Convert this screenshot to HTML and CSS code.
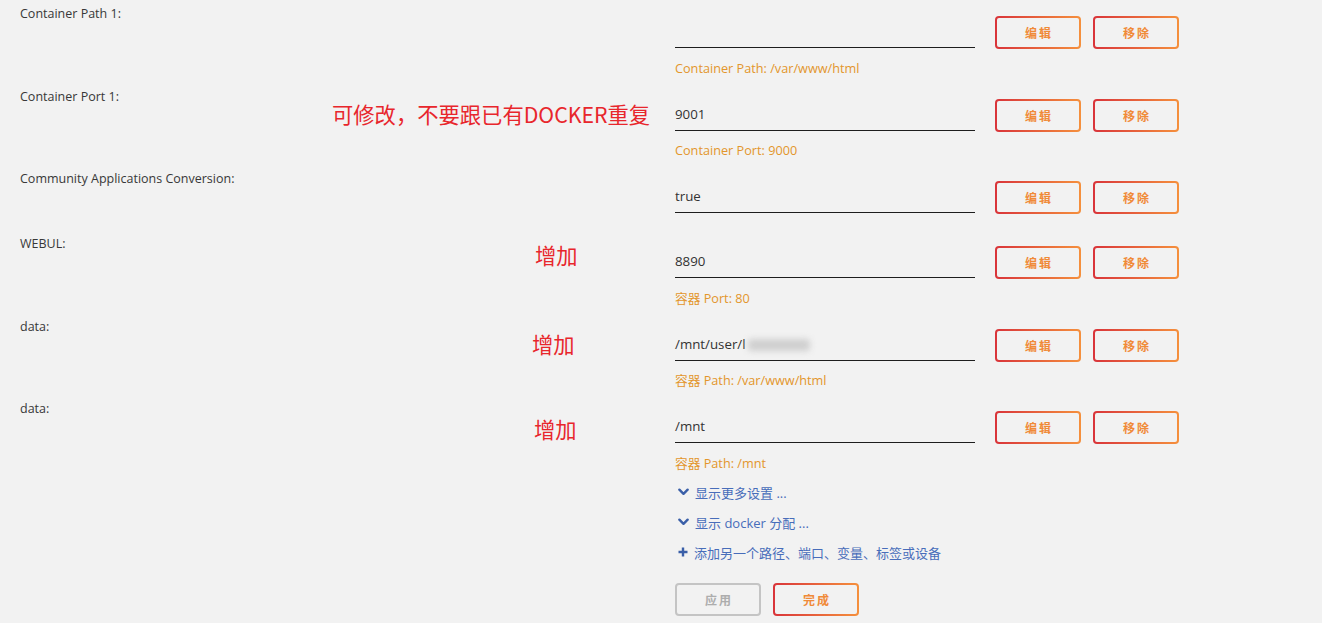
FILE: index.html
```html
<!DOCTYPE html>
<html lang="zh">
<head>
<meta charset="utf-8">
<title>Docker template</title>
<link rel="stylesheet" href="styles.css">
</head>
<body>
<div class="form">
  <div class="row">
    <div class="label">Container Path 1:</div>
    <div class="field">
      <div class="input"></div>
      <div class="desc">Container Path: /var/www/html</div>
    </div>
    <div class="actions"><button class="btn">编辑</button><button class="btn">移除</button></div>
  </div>

  <div class="row">
    <div class="label">Container Port 1:</div>
    <div class="note note-modify">可修改，不要跟已有DOCKER重复</div>
    <div class="field">
      <div class="input">9001</div>
      <div class="desc">Container Port: 9000</div>
    </div>
    <div class="actions"><button class="btn">编辑</button><button class="btn">移除</button></div>
  </div>

  <div class="row">
    <div class="label">Community Applications Conversion:</div>
    <div class="field">
      <div class="input">true</div>
    </div>
    <div class="actions"><button class="btn">编辑</button><button class="btn">移除</button></div>
  </div>

  <div class="row">
    <div class="label">WEBUL:</div>
    <div class="note note-a">增加</div>
    <div class="field">
      <div class="input">8890</div>
      <div class="desc">容器 Port: 80</div>
    </div>
    <div class="actions"><button class="btn">编辑</button><button class="btn">移除</button></div>
  </div>

  <div class="row">
    <div class="label">data:</div>
    <div class="note note-b">增加</div>
    <div class="field">
      <div class="input">/mnt/user/l<span class="blur"></span></div>
      <div class="desc">容器 Path: /var/www/html</div>
    </div>
    <div class="actions"><button class="btn">编辑</button><button class="btn">移除</button></div>
  </div>

  <div class="row">
    <div class="label">data:</div>
    <div class="note note-c">增加</div>
    <div class="field">
      <div class="input">/mnt</div>
      <div class="desc">容器 Path: /mnt</div>
    </div>
    <div class="actions"><button class="btn">编辑</button><button class="btn">移除</button></div>
  </div>

  <div class="more">
    <div class="link"><svg class="ico" viewBox="0 0 12 8" width="11" height="8"><polyline points="1.5,1.5 6,6 10.5,1.5" fill="none" stroke="#3a5fa8" stroke-width="2.6" stroke-linecap="round" stroke-linejoin="round"/></svg><span>显示更多设置 ...</span></div>
    <div class="link"><svg class="ico" viewBox="0 0 12 8" width="11" height="8"><polyline points="1.5,1.5 6,6 10.5,1.5" fill="none" stroke="#3a5fa8" stroke-width="2.6" stroke-linecap="round" stroke-linejoin="round"/></svg><span>显示 docker 分配 ...</span></div>
    <div class="link"><svg class="ico" viewBox="0 0 10 10" width="10" height="10"><path d="M5 0.5V9.5M0.5 5H9.5" stroke="#3a5fa8" stroke-width="2.4"/></svg><span>添加另一个路径、端口、变量、标签或设备</span></div>
    <div class="submit"><button class="btn disabled">应用</button><button class="btn">完成</button></div>
  </div>
</div>
</body>
</html>
```

FILE: styles.css
```css
html, body {
  margin: 0;
  padding: 0;
  background: #f2f2f2;
}
body {
  font-family: "Open Sans", "Noto Sans", "Noto Sans CJK SC", sans-serif;
  color: #333;
  font-size: 12px;
}
.form {
  padding: 6px 0 0 20px;
}
.row {
  position: relative;
  display: flex;
  align-items: flex-start;
  padding-bottom: 13px;
}
.label {
  width: 655px;
  flex: none;
  line-height: 16px;
  font-size: 12.5px;
  color: #383838;
  font-family: "Open Sans", "Noto Sans CJK SC", sans-serif;
}
.field {
  width: 300px;
  flex: none;
  margin-top: 10px;
}
.input {
  height: 32px;
  box-sizing: border-box;
  border-bottom: 1px solid #1e1e1e;
  line-height: 31px;
  font-size: 13.3px;
  color: #333;
  margin-bottom: 10px;
  white-space: nowrap;
}
.blur {
  display: inline-block;
  vertical-align: middle;
  width: 62px;
  height: 12px;
  margin-left: 2px;
  background: #cfcfcf;
  filter: blur(3px);
  border-radius: 4px;
}
.desc {
  padding-top: 1.5px;
  line-height: 16px;
  color: #e3962c;
  font-size: 12.7px;
  font-family: "Open Sans", "Noto Sans CJK SC", sans-serif;
}
.actions, .submit {
  display: flex;
  gap: 12px;
  margin-top: 10px;
  margin-left: 20px;
}
.btn {
  width: 86px;
  height: 33px;
  box-sizing: border-box;
  border: 2px solid transparent;
  border-radius: 4px;
  background:
    linear-gradient(#f2f2f2, #f2f2f2) padding-box,
    linear-gradient(90deg, #d9343a, #f5903d) border-box;
  color: #f08a38;
  font-family: "Noto Sans CJK SC", sans-serif;
  font-size: 12px;
  font-weight: bold;
  letter-spacing: 2px;
  padding: 0 0 0 2px;
  cursor: pointer;
}
.btn.disabled {
  background: #f2f2f2;
  border-color: #c4c4c4;
  color: #adadad;
}
.note {
  position: absolute;
  color: #e8262c;
  font-family: "Noto Sans CJK SC", sans-serif;
  font-size: 21.3px;
  line-height: 28px;
  white-space: nowrap;
}
.note-modify { left: 312px; top: 11px; }
.note-a { left: 515px; top: 5px; }
.note-b { left: 512px; top: 11px; }
.note-c { left: 514px; top: 14px; }
.more {
  margin-left: 655px;
  margin-top: -6.5px;
}
.link {
  display: flex;
  align-items: center;
  height: 30px;
  color: #486dba;
  font-size: 13px;
  font-family: "Open Sans", "Noto Sans CJK SC", sans-serif;
}
.ico {
  margin: 0 6px 0 3px;
  flex: none;
}
.submit {
  margin-left: 0;
  margin-top: 16px;
}
```
